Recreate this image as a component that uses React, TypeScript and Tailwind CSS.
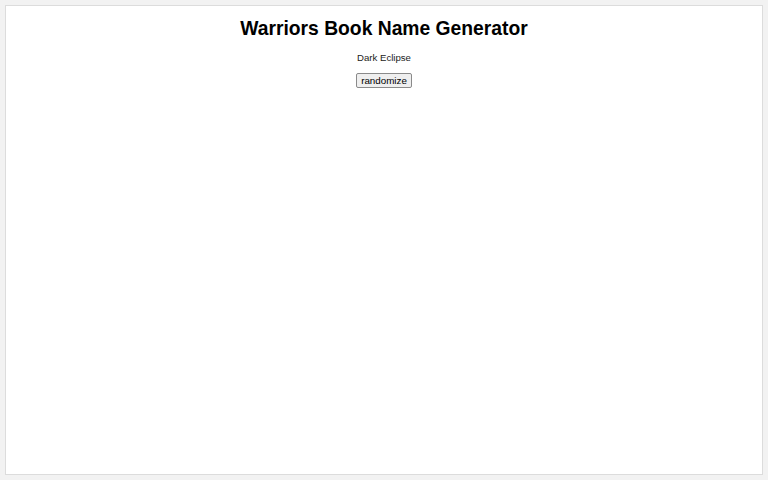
import { useState } from 'react'

const names = ['Dark Eclipse', 'Silent Storm', 'Fading Echoes', 'Night Whispers', 'Long Shadows']

export default function App() {
  const [name, setName] = useState(names[0])

  return (
    <div className="h-[480px] bg-[#f2f2f2] p-[5px] font-['Liberation_Sans',Arial,sans-serif]">
      <div className="h-full border border-[#dcdcdc] bg-white text-center">
        <h1 className="mt-[11px] text-[19.3px] font-bold leading-[24px] text-black">Warriors Book Name Generator</h1>
        <p className="mt-[11px] text-[9.6px] leading-[12px] text-[#222]">{name}</p>
        <button
          onClick={() => setName(names[Math.floor(Math.random() * names.length)])}
          className="mt-[9px] h-[15px] rounded-[2px] border border-[#8a8a8a] bg-[#efefef] px-[4px] text-[9.8px] leading-[12px] text-black"
        >
          randomize
        </button>
      </div>
    </div>
  )
}
